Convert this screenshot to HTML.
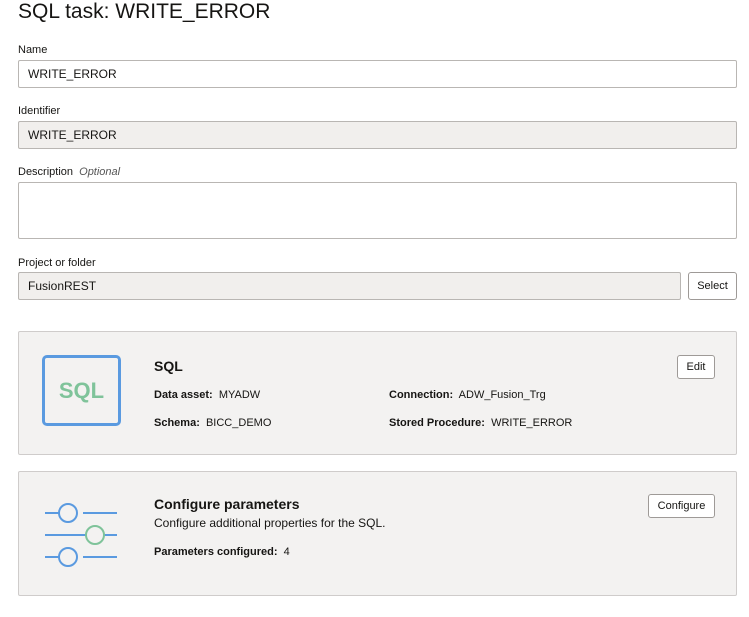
<!DOCTYPE html>
<html><head><style>
body{margin:0;background:#fff;font-family:"Liberation Sans",Arial,sans-serif;color:#161513;width:749px;height:617px;overflow:hidden;position:relative}
.a{position:absolute}
.lbl{font-size:11px;color:#161513}
.in{position:absolute;box-sizing:border-box;border:1px solid #b9b6b3;border-radius:2px;font-size:12px;padding-left:9px;display:flex;align-items:center}
.ro{background:#f1efed}
.card{position:absolute;left:18px;width:719px;box-sizing:border-box;border:1px solid #cfcccb;background:#f3f2f1;border-radius:2px}
.btn{position:absolute;box-sizing:border-box;border:1px solid #9e9a97;background:#fff;border-radius:3px;font-size:11px;display:flex;align-items:center;justify-content:center}
.b{font-weight:bold}
.f{font-size:11px}
</style></head><body>
<div class="a" style="left:18px;top:0;font-size:21px;line-height:24px">SQL task: WRITE_ERROR</div>
<div class="a lbl" style="left:18px;top:44px">Name</div>
<div class="in" style="left:18px;top:60px;width:719px;height:28px">WRITE_ERROR</div>
<div class="a lbl" style="left:18px;top:105px">Identifier</div>
<div class="in ro" style="left:18px;top:121px;width:719px;height:28px">WRITE_ERROR</div>
<div class="a lbl" style="left:18px;top:166px">Description <i style="color:#555">&nbsp;Optional</i></div>
<div class="in" style="left:18px;top:182px;width:719px;height:57px"></div>
<div class="a lbl" style="left:18px;top:257px">Project or folder</div>
<div class="in ro" style="left:18px;top:272px;width:663px;height:28px">FusionREST</div>
<div class="btn" style="left:688px;top:272px;width:49px;height:28px">Select</div>

<div class="card" style="top:331px;height:124px">
  <div class="a" style="left:23px;top:23px;width:73px;height:65px;border:3px solid #5a9ae0;border-radius:5px;background:#f3f2f1;box-sizing:content-box;display:flex;align-items:center;justify-content:center;color:#7fc39a;font-weight:bold;font-size:22px">SQL</div>
  <div class="a b" style="left:135px;top:26px;font-size:14px">SQL</div>
  <div class="a f" style="left:135px;top:57px"><b>Data asset:</b>&nbsp; MYADW</div>
  <div class="a f" style="left:135px;top:85px"><b>Schema:</b>&nbsp; BICC_DEMO</div>
  <div class="a f" style="left:370px;top:57px"><b>Connection:</b>&nbsp; ADW_Fusion_Trg</div>
  <div class="a f" style="left:370px;top:85px"><b>Stored Procedure:</b>&nbsp; WRITE_ERROR</div>
  <div class="btn" style="left:658px;top:23px;width:38px;height:24px">Edit</div>
</div>

<div class="card" style="top:471px;height:125px">
  <svg class="a" style="left:24px;top:28px" width="80" height="80" viewBox="0 0 80 80">
    <g stroke="#5a9ae0" stroke-width="2" fill="none">
      <line x1="2" y1="13" x2="16" y2="13"/><circle cx="25" cy="13" r="9"/><line x1="40" y1="13" x2="74" y2="13"/>
      <line x1="2" y1="57" x2="16" y2="57"/><circle cx="25" cy="57" r="9"/><line x1="40" y1="57" x2="74" y2="57"/>
      <line x1="2" y1="35" x2="43" y2="35"/><line x1="61" y1="35" x2="74" y2="35"/>
    </g>
    <circle cx="52" cy="35" r="9" stroke="#7fc39a" stroke-width="2" fill="none"/>
  </svg>
  <div class="a b" style="left:135px;top:24px;font-size:14px">Configure parameters</div>
  <div class="a" style="left:135px;top:44px;font-size:12px">Configure additional properties for the SQL.</div>
  <div class="a f" style="left:135px;top:74px"><b>Parameters configured:</b>&nbsp; 4</div>
  <div class="btn" style="left:629px;top:22px;width:67px;height:24px">Configure</div>
</div>
</body></html>
